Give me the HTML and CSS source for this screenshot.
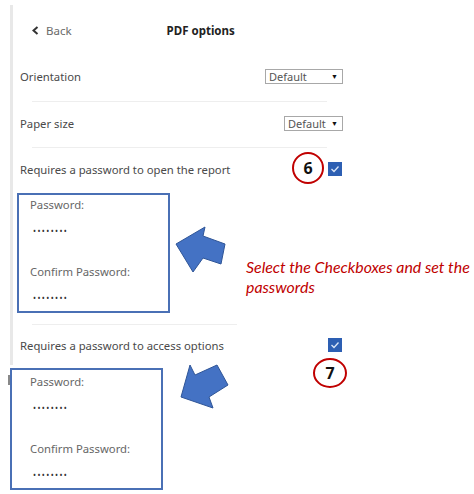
FILE: index.html
```html
<!DOCTYPE html>
<html>
<head>
<meta charset="utf-8">
<link rel="stylesheet" href="styles.css">
</head>
<body>
<div class="page">
  <div class="panel">
    <div class="header">
      <div class="back">
        <svg class="chev" width="7" height="9" viewBox="0 0 7 9"><polyline points="5.5,1 1.5,4.5 5.5,8" fill="none" stroke="#333" stroke-width="2"/></svg>
        <span>Back</span>
      </div>
      <div class="title">PDF options</div>
    </div>
    <div class="row row-orient">
      <span class="label">Orientation</span>
      <div class="select select-wide"><span>Default</span><span class="caret">▼</span></div>
    </div>
    <div class="sep"></div>
    <div class="row row-paper">
      <span class="label">Paper size</span>
      <div class="select select-narrow"><span>Default</span><span class="caret">▼</span></div>
    </div>
    <div class="sep"></div>
    <div class="row row-open">
      <span class="label">Requires a password to open the report</span>
      <span class="check"><svg width="10" height="8" viewBox="0 0 10 8"><polyline points="1.5,4 4,6.5 8.5,1.5" fill="none" stroke="#dbe6f7" stroke-width="1.3"/></svg></span>
    </div>
    <div class="pwbox pwbox-first">
      <div class="pw-label">Password:</div>
      <div class="pw-dots">••••••••</div>
      <div class="pw-label pw-confirm">Confirm Password:</div>
      <div class="pw-dots">••••••••</div>
    </div>
    <div class="sep sep-short"></div>
    <div class="row row-access">
      <span class="label">Requires a password to access options</span>
      <span class="check"><svg width="10" height="8" viewBox="0 0 10 8"><polyline points="1.5,4 4,6.5 8.5,1.5" fill="none" stroke="#dbe6f7" stroke-width="1.3"/></svg></span>
    </div>
  </div>
  <div class="pwbox pwbox-second">
    <div class="pw-label">Password:</div>
    <div class="pw-dots">••••••••</div>
    <div class="pw-label pw-confirm">Confirm Password:</div>
    <div class="pw-dots">••••••••</div>
  </div>

  <div class="edge-mark"></div>
  <svg class="arrows" width="474" height="494" viewBox="0 0 474 494">
    <polygon points="176,244 205,227 203,236 225,244 221,264 203,258 193,272" fill="#4472c4" stroke="#2f5597" stroke-width="1" stroke-linejoin="round"/>
    <polygon points="181,397 190,365 195,375 217,365 228,385 209,397 213,408" fill="#4472c4" stroke="#2f5597" stroke-width="1" stroke-linejoin="round"/>
  </svg>
  <div class="badge badge-6">6</div>
  <div class="badge badge-7">7</div>
  <div class="note">Select the Checkboxes and set the<br>passwords</div>
</div>
</body>
</html>
```

FILE: styles.css
```css
html, body {
  margin: 0;
  padding: 0;
  background: #ffffff;
}

.page {
  position: relative;
  width: 474px;
  height: 494px;
  padding-top: 5px;
  box-sizing: border-box;
  overflow: hidden;
  font-family: "Noto Sans", "Open Sans", sans-serif;
  font-size: 11px;
  color: #4a4a4a;
}

.panel {
  margin-left: 10px;
  border-left: 3px solid #e8e8e8;
  width: 330px;
}

.header {
  height: 50px;
  display: flex;
  align-items: center;
  padding-left: 19px;
}

.back {
  display: flex;
  align-items: center;
  gap: 7px;
  color: #6a6a6a;
  font-size: 11.5px;
}

.chev {
  display: block;
}

.title {
  margin-left: 95px;
  font-weight: 700;
  color: #222;
  font-size: 11.5px;
}

.row {
  display: flex;
  align-items: center;
  justify-content: space-between;
  padding-left: 7px;
  box-sizing: border-box;
}

.row-orient { height: 46px; padding-bottom: 4px; }
.row-paper { height: 45px; padding-bottom: 3px; }
.row-open { height: 42px; }
.row-access { height: 40px; }

.label {
  font-size: 11.3px;
  color: #4a4a4a;
}

.sep {
  height: 1px;
  background: #eeeeee;
  margin-left: 19px;
  width: 295px;
}

.sep-short {
  width: 205px;
  margin-top: 11px;
}

.select {
  height: 15px;
  box-sizing: border-box;
  border: 1px solid #a8a8a8;
  display: flex;
  align-items: center;
  justify-content: space-between;
  padding: 0 4px 0 3px;
  font-size: 11px;
  color: #555;
}

.select-wide { width: 78px; }
.select-narrow { width: 59px; }

.caret {
  font-size: 7px;
  color: #111;
}

.check {
  width: 14px;
  height: 14px;
  margin-right: 1px;
  background: #2d5fb3;
  display: flex;
  align-items: center;
  justify-content: center;
}

.pwbox {
  width: 153px;
  box-sizing: border-box;
  border: 2px solid #4a70b5;
  padding-left: 11px;
}

.pwbox-first {
  margin-left: 4px;
  margin-top: 3px;
  height: 120px;
}

.pwbox-second {
  margin-left: 10px;
  margin-top: 3px;
  height: 122px;
  padding-top: 2px;
  padding-left: 18px;
}

.pw-label {
  line-height: 20px;
  height: 20px;
  font-size: 11.3px;
  color: #666;
}

.pw-confirm {
  margin-top: 21px;
}

.pw-dots {
  margin-top: 6px;
  line-height: 20px;
  height: 20px;
  padding-left: 3px;
  font-size: 8px;
  letter-spacing: 1.4px;
  color: #333;
}

.edge-mark {
  position: absolute;
  left: 8px;
  top: 375px;
  width: 2px;
  height: 10px;
  background: #888;
}

.arrows {
  position: absolute;
  left: 0;
  top: 0;
  pointer-events: none;
}

.badge {
  position: absolute;
  box-sizing: border-box;
  border: 2px solid #c00000;
  border-radius: 50%;
  display: flex;
  align-items: center;
  justify-content: center;
  font-family: "Open Sans", "Noto Sans", sans-serif;
  font-weight: 700;
  font-size: 16px;
  color: #111;
  background: #fff;
}

.badge-6 {
  left: 292px;
  top: 152px;
  width: 32px;
  height: 32px;
}

.badge-7 {
  left: 313px;
  top: 358px;
  width: 34px;
  height: 30px;
}

.note {
  position: absolute;
  left: 246px;
  top: 257px;
  line-height: 20px;
  font-family: "Lato", "Open Sans", sans-serif;
  font-style: italic;
  font-size: 15.9px;
  color: #c00000;
}
```
